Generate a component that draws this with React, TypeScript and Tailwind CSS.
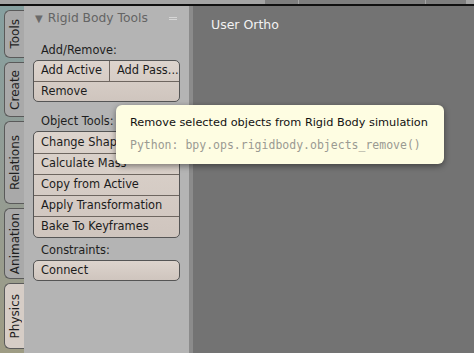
import React from "react";

const tabs = [
    { label: "Tools", h: 48, active: false },
    { label: "Create", h: 55, active: false },
    { label: "Relations", h: 83, active: false },
    { label: "Animation", h: 71, active: false },
    { label: "Physics", h: 66, active: true },
];

function Tab({ label, h, active }: { label: string; h: number; active: boolean }) {
    return (
        <div
            style={{ height: h }}
            className={`flex w-[20px] items-center justify-center rounded-l-[6px] border border-r-0 border-[#5a5a5a] ${
                active ? "bg-[#d6cdc6]" : "bg-[#a9a9a9]"
            }`}
        >
            <span className="rotate-180 text-[12px] leading-none text-[#1e1e1e] [writing-mode:vertical-rl]">
                {label}
            </span>
        </div>
    );
}

function ButtonGroup({ rows, rowH }: { rows: string[][]; rowH: number }) {
    return (
        <div className="mx-[9px] flex flex-col overflow-hidden rounded-[5px] border border-[#555] bg-gradient-to-b from-[#ddd4cd] to-[#cfc5be]">
            {rows.map((row, i) => (
                <div
                    key={i}
                    style={{ height: rowH }}
                    className={`flex ${i > 0 ? "border-t border-[#6e6660]" : ""}`}
                >
                    {row.map((label, j) => (
                        <div
                            key={label}
                            className={`flex flex-1 items-center px-[7px] text-[11.4px] text-[#1c1c1c] ${
                                j > 0 ? "border-l border-[#6e6660]" : ""
                            }`}
                        >
                            <span className="whitespace-nowrap">{label}</span>
                        </div>
                    ))}
                </div>
            ))}
        </div>
    );
}

function Label({ children }: { children: React.ReactNode }) {
    return <div className="h-[12px] px-[8px] text-[11.4px] leading-[12px] text-[#1e1e1e]">{children}</div>;
}

export default function App() {
    return (
        <div className="relative flex h-[353px] w-[474px] flex-col overflow-hidden bg-[#737373] font-['DejaVu_Sans',sans-serif]">
            {/* header strip */}
            <div className="flex h-[4px] bg-[#a4a4a4]">
                <div className="ml-[265px] w-[33px] bg-[#7e7e7e]" />
                <div className="ml-[1px] w-[126px] bg-[#7e7e7e]" />
                <div className="ml-[1px] w-[40px] bg-[#7e7e7e]" />
            </div>
            <div className="h-[2px] bg-[#101010]" />

            <div className="flex flex-1">
                {/* tab column */}
                <div className="flex w-[24px] flex-col items-end gap-[4px] bg-gradient-to-b from-[#86a0a0] via-[#949c94] to-[#9e9c84] pt-[4px]">
                    {tabs.map((t) => (
                        <Tab key={t.label} {...t} />
                    ))}
                </div>

                {/* tool shelf */}
                <div className="flex w-[165px] flex-col bg-[#b4b4b4]">
                    <div className="flex h-[24px] items-center pl-[11px] pr-[12px] pt-[1px]">
                        <span className="text-[10px] text-[#6a6a6a]">▼</span>
                        <span className="ml-[5px] text-[12.3px] text-[#646464]">Rigid Body Tools</span>
                        <span className="ml-auto flex flex-col gap-[1px]">
                            <span className="h-[1px] w-[8px] bg-[#d6d6d6]" />
                            <span className="h-[1px] w-[8px] bg-[#d6d6d6]" />
                        </span>
                    </div>
                    <div className="mt-[14px] pl-[9px]">
                        <Label>Add/Remove:</Label>
                    </div>
                    <div className="mt-[4px]">
                        <ButtonGroup rows={[["Add Active", "Add Pass..."], ["Remove"]]} rowH={20} />
                    </div>
                    <div className="mt-[13px] pl-[9px]">
                        <Label>Object Tools:</Label>
                    </div>
                    <div className="mt-[4px]">
                        <ButtonGroup
                            rows={[
                                ["Change Shape"],
                                ["Calculate Mass"],
                                ["Copy from Active"],
                                ["Apply Transformation"],
                                ["Bake To Keyframes"],
                            ]}
                            rowH={21}
                        />
                    </div>
                    <div className="mt-[6px] pl-[9px]">
                        <Label>Constraints:</Label>
                    </div>
                    <div className="mt-[4px]">
                        <ButtonGroup rows={[["Connect"]]} rowH={19} />
                    </div>
                </div>

                <div className="w-[4px] bg-[#8b8b8b]" />

                {/* viewport */}
                <div className="flex-1 bg-[#737373] pl-[18px] pt-[6px]">
                    <span className="text-[12.5px] text-[#f2f2f2]">User Ortho</span>
                </div>
            </div>

            {/* tooltip */}
            <div className="absolute left-[116px] top-[105px] flex h-[59px] w-[328px] flex-col justify-center gap-[12px] rounded-[6px] bg-[#fefde2] pl-[14px] shadow-[0_2px_6px_rgba(0,0,0,0.45)]">
                <div className="whitespace-nowrap text-[11.3px] leading-none text-[#111]">
                    Remove selected objects from Rigid Body simulation
                </div>
                <div className="whitespace-nowrap font-['DejaVu_Sans_Mono',monospace] text-[11.5px] leading-none text-[#9a9a92]">
                    Python: bpy.ops.rigidbody.objects_remove()
                </div>
            </div>
        </div>
    );
}
